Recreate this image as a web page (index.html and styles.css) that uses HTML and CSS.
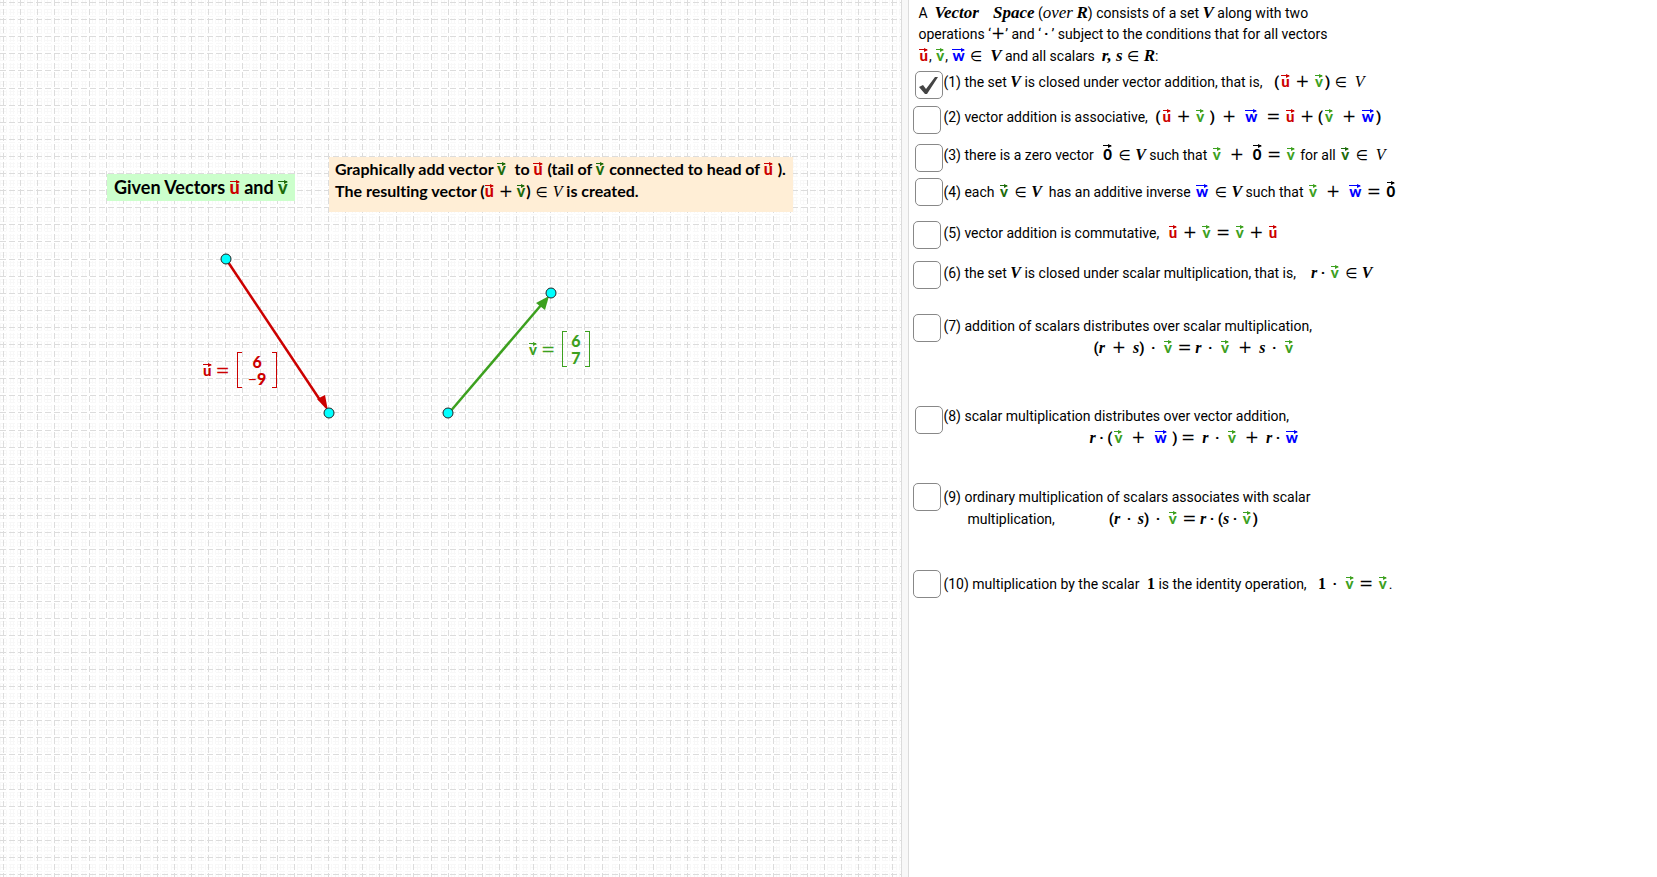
FILE: index.html
```html
<!DOCTYPE html>
<html lang="en">
<head>
<meta charset="utf-8">
<title>Vector Space</title>
<link rel="stylesheet" href="styles.css">
</head>
<body>
<main class="app">
<section class="canvas" aria-label="Graphics view">
  <svg class="plot" aria-hidden="true">
    <g id="minor" class="minor"></g>
    <g id="major" class="major"></g>
    <g class="vector-u"><path d="M226 259 320 400"/><polygon points="317,399 325,395 328,411"/></g>
    <g class="vector-v"><path d="M449 413 542 304"/><polygon points="536,303 549,296 545,310"/></g>
    <g class="points"><circle cx="226" cy="259" r="5"/><circle cx="329" cy="413" r="5"/><circle cx="448" cy="413" r="5"/><circle cx="551" cy="293" r="5"/></g>
  </svg>
  <div class="note given">Given Vectors <span class="vec u">u</span> and <span class="vec v">v</span></div>
  <div class="note steps">
    <p>Graphically add vector <span class="vec v">v</span>&nbsp; to <span class="vec u">u</span> (tail of <span class="vec v">v</span> connected to head of <span class="vec u">u</span> ).</p>
    <p>The resulting vector (<span class="vec u">u</span> <span class="op">+</span> <span class="vec v">v</span>) <span class="in">∈</span> <i class="set">V</i> is created.</p>
  </div>
  <div class="matrix matrix-u"><span class="vec">u</span><span class="op">=</span><span class="column"><b>6</b><b><span class="minus">−</span>9</b></span></div>
  <div class="matrix matrix-v"><span class="vec">v</span><span class="op">=</span><span class="column"><b>6</b><b>7</b></span></div>
</section>
<div class="divider"></div>
<section class="panel">
  <div class="intro">
    <p>A&nbsp; <i>Vector</i> &ensp;&nbsp;<i>Space</i> (<i class="thin">over</i> <i>R</i>) consists of a set <i>V</i> along with two</p>
    <p>operations ‘<span class="op">+</span>’ and ‘<b class="dot">·</b>’ subject to the conditions that for all vectors</p>
    <p><span class="vec u">u</span>, <span class="vec v">v</span>, <span class="vec w">w</span> <span class="in">∈</span>&nbsp; <i>V</i> and all scalars &nbsp;<i>r, s</i> <span class="in">∈</span> <i>R</i>:</p>
  </div>
  <ol class="axioms">
    <li class="axiom a1 inset"><span class="box"><input type="checkbox" id="a1" checked><svg class="tick" viewBox="0 0 28 28" aria-hidden="true"><path d="M4 16 8 14 11 18 20 6 23 6 12 23 10 23Z"/></svg></span>
      <label for="a1">(1) the set <i>V</i> is closed under vector addition, that is, <span class="math"><b>(</b><span class="vec u">u</span> <span class="op">+</span> <span class="vec v">v</span><b>)</b> <span class="in">∈</span>&nbsp; <i class="set">V</i></span></label></li>
    <li class="axiom a2"><span class="box"><input type="checkbox" id="a2"></span>
      <label for="a2">(2) vector addition is associative, <span class="math near"><b>(</b><span class="vec u">u</span> <span class="op">+</span> <span class="vec v">v</span> <b>)</b>&nbsp; <span class="op">+</span>&nbsp; <span class="vec w">w</span>&nbsp; <span class="op">=</span> <span class="vec u">u</span> <span class="op">+</span> <b>(</b><span class="vec v">v</span>&nbsp; <span class="op">+</span> <span class="vec w">w</span><b>)</b></span></label></li>
    <li class="axiom a3 inset"><span class="box"><input type="checkbox" id="a3"></span>
      <label for="a3">(3) there is a zero vector <span class="math near"><span class="vec zero">0</span> <span class="in">∈</span> <i>V</i></span> such that <span class="vec v">v</span>&nbsp; <span class="op">+</span>&nbsp; <span class="vec zero">0</span> <span class="op">=</span> <span class="vec v">v</span> for all <span class="vec v dark">v</span> <span class="in">∈</span>&nbsp; <i class="set">V</i></label></li>
    <li class="axiom a4 inset"><span class="box"><input type="checkbox" id="a4"></span>
      <label for="a4">(4) each <span class="vec v dark">v</span> <span class="in">∈</span> <i>V</i> &nbsp;has an additive inverse <span class="vec w">w</span> <span class="in">∈</span> <i>V</i> such that <span class="vec v">v</span>&nbsp; <span class="op">+</span>&nbsp; <span class="vec w">w</span> <span class="op">=</span> <span class="vec zero">0</span></label></li>
    <li class="axiom a5"><span class="box"><input type="checkbox" id="a5"></span>
      <label for="a5">(5) vector addition is commutative, <span class="math near"><span class="vec u">u</span> <span class="op">+</span> <span class="vec v">v</span> <span class="op">=</span> <span class="vec v">v</span> <span class="op">+</span> <span class="vec u">u</span></span></label></li>
    <li class="axiom a6"><span class="box"><input type="checkbox" id="a6"></span>
      <label for="a6">(6) the set <i>V</i> is closed under scalar multiplication, that is,&nbsp; <span class="math"><i>r</i> <b>·</b> <span class="vec v">v</span> <span class="in">∈</span> <i>V</i></span></label></li>
    <li class="axiom a7"><span class="box"><input type="checkbox" id="a7"></span>
      <label for="a7">(7) addition of scalars distributes over scalar multiplication,<span class="formula f7"><b>(</b><i>r</i>&nbsp; <span class="op">+</span>&nbsp; <i>s</i><b>)</b> <b class="dot">·</b> <span class="vec v">v</span> <span class="op">=</span> <i>r</i> <b class="dot">·</b> <span class="vec v">v</span>&nbsp; <span class="op">+</span>&nbsp; <i>s</i> <b class="dot">·</b> <span class="vec v">v</span></span></label></li>
    <li class="axiom a8 inset"><span class="box"><input type="checkbox" id="a8"></span>
      <label for="a8">(8) scalar multiplication distributes over vector addition,<span class="formula f8"><i>r</i> <b>·</b> <b>(</b><span class="vec v">v</span>&nbsp; <span class="op">+</span>&nbsp; <span class="vec w">w</span> <b>)</b> <span class="op">=</span>&nbsp; <i>r</i> <b class="dot">·</b> <span class="vec v">v</span>&nbsp; <span class="op">+</span>&nbsp; <i>r</i> <b>·</b> <span class="vec w">w</span></span></label></li>
    <li class="axiom a9"><span class="box"><input type="checkbox" id="a9"></span>
      <label for="a9">(9) ordinary multiplication of scalars associates with scalar<span class="formula f9"><span>multiplication,</span><span><b>(</b><i>r</i> <b class="dot">·</b> <i>s</i><b>)</b> <b class="dot">·</b> <span class="vec v">v</span> <span class="op">=</span> <i>r</i> <b>·</b> <b>(</b><i>s</i> <b>·</b> <span class="vec v">v</span><b>)</b></span></span></label></li>
    <li class="axiom a10"><span class="box"><input type="checkbox" id="a10"></span>
      <label for="a10">(10) multiplication by the scalar <b class="num near">1</b> is the identity operation, <span class="math"><b class="num">1</b> <b class="dot">·</b> <span class="vec v">v</span> <span class="op">=</span> <span class="vec v">v</span>.</span></label></li>
  </ol>
</section>
</main>
<script src="grid.js"></script>
</body>
</html>
```
FILE: styles.css
```css
* { box-sizing: border-box; }
body { margin: 0; background: #fff; color: #000; font: 14px/20px Roboto, "Open Sans", sans-serif; font-variant-ligatures: none; }
p, ol { margin: 0; padding: 0; }
.app { display: grid; grid-template-columns: 54.4% 8px minmax(0, 1fr); min-height: 100vh; }
.canvas { position: relative; overflow: hidden; background: #fff; }
.plot { position: absolute; inset: 0; width: 100%; height: 100%; }
.minor, .major { fill: none; stroke-width: 1; shape-rendering: crispEdges; stroke-dasharray: 6 3; }
.minor { stroke: #f8f8f8; }
.major { stroke: #dcdcdc; }
.vector-u { stroke: #c00; stroke-width: 2.5; }
.vector-u polygon { fill: #c00; stroke: none; }
.vector-v { stroke: #3ca01e; stroke-width: 2.5; }
.vector-v polygon { fill: #3ca01e; stroke: none; }
.points circle { fill: #00ffff; stroke: #222; stroke-width: 1; }
.divider { background: #f8f8f8; border: solid #dcdcdc; border-width: 0 1px; }

i { font: italic 700 16px/18px "Liberation Serif", serif; }
i.thin, i.set { font-weight: 400; }
.intro i { font-size: 17px; }
.panel b { font-size: 15px; }
.panel .num { font-family: "Liberation Serif", serif; font-size: 16px; }
.math { margin-left: 8px; }
.near { margin-left: 4px; }
.op { font: 17px/18px "DejaVu Sans", sans-serif; }
.in { margin: 0 1px; font: 14px/18px "DejaVu Sans", sans-serif; }
.dot { margin: 0 3px; }
.vec { position: relative; display: inline-block; margin: 0 2px; font: 900 15px/20px Lato, sans-serif; }
.vec::before { content: ""; position: absolute; left: 0; right: 1px; top: 4px; height: 1px; background: currentColor; }
.vec::after { content: ""; position: absolute; right: 0; top: 3px; border: solid transparent; border-width: 2px 0 2px 4px; border-left-color: currentColor; }
.zero::before { top: 1px; }
.zero::after { top: 0; }
.intro .vec { margin: 0 1px; }
.u { color: #c00; }
.v { color: #3ca01e; }
.w { color: #00f; }
.dark, .note .v { color: #1c6b0a; }

.note { position: absolute; font-family: Lato, sans-serif; font-weight: 700; white-space: nowrap; }
.note .vec { margin: 0; font-size: inherit; }
.steps .vec { margin: 0 1px 0 0; }
.given { left: 107px; top: 174px; width: 188px; height: 27px; padding: 0 7px; font-size: 18px; line-height: 27px; background: #cfc; }
.steps { left: 329px; top: 157px; width: 464px; height: 55px; padding: 1px 6px; font-size: 16px; line-height: 22px; background: #ffeed6; }

.matrix { position: absolute; display: flex; align-items: center; gap: 2px; font: 700 16px/17px Lato, sans-serif; }
.matrix-u { left: 201px; top: 352px; color: #c00; }
.matrix-v { left: 527px; top: 331px; color: #3ca01e; }
.column { position: relative; display: grid; text-align: center; padding: 1px 9px; margin-left: 5px; }
.matrix-u .column { padding: 1px 11px; }
.minus { font-weight: 400; }
.column::before, .column::after { content: ""; position: absolute; top: 0; bottom: 0; width: 4px; border: 1px solid; }
.column::before { left: 0; border-right: 0; }
.column::after { right: 0; border-left: 0; }

.panel { padding: 3px 0 0 4px; white-space: nowrap; }
.intro { padding-left: 5px; line-height: 21px; }
.axioms { list-style: none; padding-top: 4px; }
.axiom { display: grid; grid-template-columns: 30px 1fr; align-items: start; line-height: 22px; }
.box { display: grid; width: 28px; height: 28px; }
.inset .box { justify-self: end; }
.box input { grid-area: 1 / 1; appearance: none; width: 28px; height: 28px; margin: 0; border: 1px solid #888; border-radius: 5px; background: #fff; }
.tick { grid-area: 1 / 1; width: 28px; height: 28px; pointer-events: none; fill: #444; }
.formula { display: block; }
.a2 { margin-top: 7px; }
.a3 { margin-top: 10px; }
.a4 { margin-top: 6px; }
.a5 { margin-top: 15px; }
.a6 { margin-top: 12px; }
.a7 { margin-top: 25px; }
.a8 { margin-top: 46px; }
.a9 { margin-top: 34px; }
.a10 { margin-top: 40px; }
.a4 label, .a9 label, .a10 label { padding-top: 3px; }
.a5 label, .a6 label, .a7 label { padding-top: 1px; }
.a7 { min-height: 46px; }
.a8 { min-height: 43px; }
.a8 label { line-height: 21px; }
.f7 { padding-left: 150px; }
.f8 { padding-left: 146px; }
.f9 { display: flex; padding-left: 24px; gap: 54px; }
```
FILE: grid.js
```javascript
const NS = "http://www.w3.org/2000/svg";
const unit = 17.1, originX = 3.5, originY = 2.5, steps = 5;
const paths = { minor: "", major: "" };
const width = 3000, height = 2000;
for (let n = -1; n * unit / steps < width; n++) {
  const x = Math.floor(originX + n * unit / steps) + 0.5;
  paths[n % steps ? "minor" : "major"] += `M${x} 0V${height}`;
}
for (let n = 0; n * unit / steps < height; n++) {
  const y = Math.floor(originY + n * unit / steps) + 0.5;
  paths[n % steps ? "minor" : "major"] += `M0 ${y}H${width}`;
}
for (const id of ["minor", "major"]) {
  const path = document.createElementNS(NS, "path");
  path.setAttribute("d", paths[id]);
  document.getElementById(id).appendChild(path);
}
```
